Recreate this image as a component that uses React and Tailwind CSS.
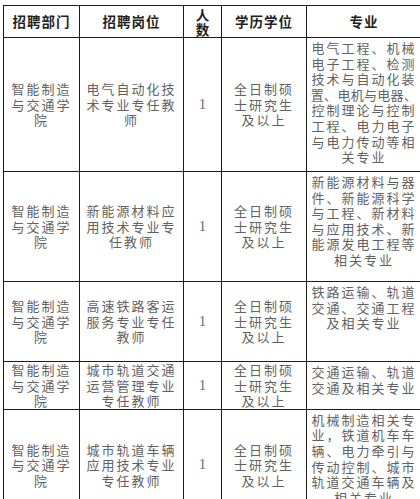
const rows = [
  {
    h: "h-[134px]",
    dept: ["智能制造", "与交通学", "院"],
    post: ["电气自动化技", "术专业专任教", "师"],
    num: "1",
    degree: ["全日制硕", "士研究生", "及以上"],
    major: [
      "电气工程、机械",
      "电子工程、检测",
      "技术与自动化装",
      "置、电机与电器、",
      "控制理论与控制",
      "工程、电力电子",
      "与电力传动等相",
      "关专业",
    ],
  },
  {
    h: "h-[110px]",
    dept: ["智能制造", "与交通学", "院"],
    post: ["新能源材料应", "用技术专业专", "任教师"],
    num: "1",
    degree: ["全日制硕", "士研究生", "及以上"],
    major: [
      "新能源材料与器",
      "件、新能源科学",
      "与工程、新材料",
      "与应用技术、新",
      "能源发电工程等",
      "相关专业",
    ],
  },
  {
    h: "h-[80px]",
    dept: ["智能制造", "与交通学", "院"],
    post: ["高速铁路客运", "服务专业专任", "教师"],
    num: "1",
    degree: ["全日制硕", "士研究生", "及以上"],
    major: ["铁路运输、轨道", "交通、交通工程", "及相关专业"],
  },
  {
    h: "h-[47px]",
    dept: ["智能制造", "与交通学", "院"],
    post: ["城市轨道交通", "运营管理专业", "专任教师"],
    num: "1",
    degree: ["全日制硕", "士研究生", "及以上"],
    major: ["交通运输、轨道", "交通及相关专业"],
  },
  {
    h: "h-[112px]",
    dept: ["智能制造", "与交通学", "院"],
    post: ["城市轨道车辆", "应用技术专业", "专任教师"],
    num: "1",
    degree: ["全日制硕", "士研究生", "及以上"],
    major: [
      "机械制造相关专",
      "业，铁道机车车",
      "辆、电力牵引与",
      "传动控制、城市",
      "轨道交通车辆及",
      "相关专业",
    ],
  },
]

function Lines({ lines }) {
  return (
    <>
      {lines.map((line, i) => (
        <div
          key={i}
          className={`whitespace-nowrap ${line.length > 7 ? "tracking-[0.3px]" : "tracking-[2px]"}`}
        >
          {line}
        </div>
      ))}
    </>
  )
}

const cell = "border border-[#1c1c1c] px-[2px] py-0 text-center align-middle"

export default function App() {
  return (
    <div
      className="w-[420px] h-[499px] overflow-hidden bg-white pt-[5px] pl-[3px]"
      style={{ fontFamily: '"Noto Sans CJK SC", "Liberation Serif", serif' }}
    >
      <table className="w-[418px] table-fixed border-collapse text-[13px] leading-[15.6px] text-[#626262]">
        <colgroup>
          <col className="w-[76px]" />
          <col className="w-[104px]" />
          <col className="w-[38px]" />
          <col className="w-[85px]" />
          <col className="w-[115px]" />
        </colgroup>
        <thead>
          <tr className="h-[32px] font-bold text-[#1f1f1f] text-[13.5px]">
            <th className={`${cell} tracking-[1px]`}>招聘部门</th>
            <th className={`${cell} tracking-[1px]`}>招聘岗位</th>
            <th className={`${cell} leading-[15px]`}>
              <div>人</div>
              <div>数</div>
            </th>
            <th className={`${cell} tracking-[1px]`}>学历学位</th>
            <th className={`${cell} tracking-[1px]`}>专业</th>
          </tr>
        </thead>
        <tbody>
          {rows.map((r, i) => (
            <tr key={i} className={r.h}>
              <td className={cell}>
                <Lines lines={r.dept} />
              </td>
              <td className={cell}>
                <Lines lines={r.post} />
              </td>
              <td className={`${cell} font-['Liberation_Serif'] text-[14px]`}>{r.num}</td>
              <td className={cell}>
                <Lines lines={r.degree} />
              </td>
              <td className={`${cell} align-top pt-[2px]`}>
                <Lines lines={r.major} />
              </td>
            </tr>
          ))}
        </tbody>
      </table>
    </div>
  )
}
